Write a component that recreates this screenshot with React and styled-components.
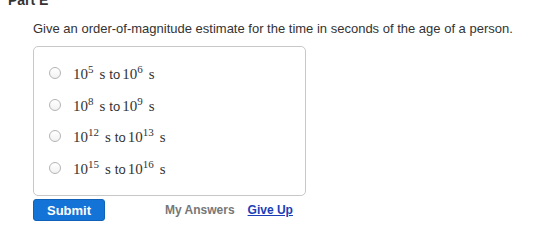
import React from 'react';
import styled, { createGlobalStyle } from 'styled-components';

const GlobalStyle = createGlobalStyle`
  body {
    margin: 0;
    background: #fff;
    font-family: "Liberation Sans", Arial, Helvetica, sans-serif;
    color: #333;
  }
`;

const options = [
  ['5', '6'],
  ['8', '9'],
  ['12', '13'],
  ['15', '16'],
];

const Power = ({ exp }) => (
  <Math>
    10<Sup>{exp}</Sup>
  </Math>
);

const App = () => (
  <>
    <GlobalStyle />
    <Page>
      <Heading>Part E</Heading>
      <Body>
        <Question>
          Give an order-of-magnitude estimate for the time in seconds of the age of a person.
        </Question>
        <Choices>
          {options.map(([a, b]) => (
            <Choice key={a}>
              <Radio />
              <Label>
                <Power exp={a} />
                <Unit>s</Unit>
                <Word>to</Word>
                <Power exp={b} />
                <Unit>s</Unit>
              </Label>
            </Choice>
          ))}
        </Choices>
        <Actions>
          <Submit type="button">Submit</Submit>
          <MyAnswers>My Answers</MyAnswers>
          <GiveUp href="#">Give Up</GiveUp>
        </Actions>
      </Body>
    </Page>
  </>
);

export default App;

const Page = styled.div`
  padding: 0 8px;
`;

const Heading = styled.h3`
  margin: -8px 0 0;
  font-size: 14px;
  font-weight: bold;
  color: #333;
  line-height: 16px;
`;

const Body = styled.div`
  padding-left: 25px;
`;

const Question = styled.p`
  margin: 13px 0 9px;
  font-size: 13px;
  line-height: 16px;
  color: #333;
`;

const Choices = styled.div`
  width: 273px;
  height: 150px;
  box-sizing: border-box;
  border: 1px solid #c8c8c8;
  border-radius: 5px;
  padding: 17px 0 0 15px;
  display: flex;
  flex-direction: column;
  gap: 13.5px;
`;

const Choice = styled.div`
  display: flex;
  align-items: center;
  height: 18px;
`;

const Radio = styled.span`
  width: 12px;
  height: 12px;
  box-sizing: border-box;
  border: 1px solid #b4b4b4;
  border-radius: 50%;
  background: linear-gradient(#fff, #f2f2f2);
  margin-right: 12px;
  flex-shrink: 0;
`;

const Label = styled.span`
  display: flex;
  align-items: baseline;
  white-space: nowrap;
  padding-top: 3px;
`;

const Math = styled.span`
  font-family: "Liberation Serif", "Times New Roman", serif;
  font-size: 15px;
  color: #333;
`;

const Sup = styled.sup`
  font-size: 11px;
  vertical-align: 0;
  position: relative;
  top: -6px;
`;

const Unit = styled.span`
  font-family: "Liberation Serif", "Times New Roman", serif;
  font-size: 15px;
  margin-left: 6px;
  color: #333;
`;

const Word = styled.span`
  font-size: 13px;
  margin: 0 2px 0 4px;
  color: #333;
`;

const Actions = styled.div`
  display: flex;
  align-items: center;
  margin-top: 3px;
`;

const Submit = styled.button`
  width: 72px;
  height: 22px;
  background: #1473d6;
  border: 1px solid #0f62b8;
  border-radius: 3px;
  color: #fff;
  font-family: "Liberation Sans", Arial, sans-serif;
  font-size: 13px;
  font-weight: bold;
  padding: 0;
  cursor: pointer;
`;

const MyAnswers = styled.span`
  margin-left: 60px;
  font-size: 12px;
  font-weight: bold;
  color: #777;
`;

const GiveUp = styled.a`
  margin-left: 13px;
  font-size: 12px;
  font-weight: bold;
  color: #1a3db8;
  text-decoration: underline;
`;
